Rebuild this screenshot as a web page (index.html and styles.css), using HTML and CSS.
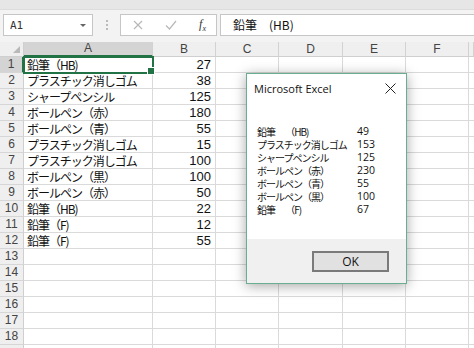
FILE: index.html
```html
<!DOCTYPE html>
<html lang="ja">
<head>
    <meta charset="UTF-8">
    <title>Excel - MsgBox</title>
    <link rel="stylesheet" href="styles.css">
</head>
<body>
    <div class="ribbon"></div>

    <!-- 数式バー -->
    <div class="fbar">
        <div class="namebox"><span>A1</span><span class="caret"></span></div>
        <div class="grip"><i></i><i></i><i></i></div>
        <div class="fx-tools">
            <svg width="10" height="10" viewBox="0 0 10 10"><path d="M1 1L9 9M9 1L1 9" stroke="#b8b8b8" stroke-width="1.2" fill="none"/></svg>
            <svg width="12" height="10" viewBox="0 0 12 10"><path d="M1 5.5L4.5 9L11 1" stroke="#b8b8b8" stroke-width="1.2" fill="none"/></svg>
            <span class="fx">f<sub>x</sub></span>
        </div>
        <div class="fx-input">鉛筆　(HB)</div>
    </div>

    <!-- シート -->
    <div class="sheet">
        <div class="row hdr">
            <div class="corner"><span class="tri"></span></div>
            <div class="ch sel">A</div><div class="ch">B</div><div class="ch">C</div><div class="ch">D</div><div class="ch">E</div><div class="ch">F</div><div class="ch"></div>
        </div>
        <div class="row"><div class="rh sel">1</div><div class="c active">鉛筆（HB)</div><div class="c n">27</div><div class="c"></div><div class="c"></div><div class="c"></div><div class="c"></div><div class="c"></div></div>
        <div class="row"><div class="rh">2</div><div class="c">プラスチック消しゴム</div><div class="c n">38</div><div class="c"></div><div class="c"></div><div class="c"></div><div class="c"></div><div class="c"></div></div>
        <div class="row"><div class="rh">3</div><div class="c">シャープペンシル</div><div class="c n">125</div><div class="c"></div><div class="c"></div><div class="c"></div><div class="c"></div><div class="c"></div></div>
        <div class="row"><div class="rh">4</div><div class="c">ボールペン（赤）</div><div class="c n">180</div><div class="c"></div><div class="c"></div><div class="c"></div><div class="c"></div><div class="c"></div></div>
        <div class="row"><div class="rh">5</div><div class="c">ボールペン（青）</div><div class="c n">55</div><div class="c"></div><div class="c"></div><div class="c"></div><div class="c"></div><div class="c"></div></div>
        <div class="row"><div class="rh">6</div><div class="c">プラスチック消しゴム</div><div class="c n">15</div><div class="c"></div><div class="c"></div><div class="c"></div><div class="c"></div><div class="c"></div></div>
        <div class="row"><div class="rh">7</div><div class="c">プラスチック消しゴム</div><div class="c n">100</div><div class="c"></div><div class="c"></div><div class="c"></div><div class="c"></div><div class="c"></div></div>
        <div class="row"><div class="rh">8</div><div class="c">ボールペン（黒）</div><div class="c n">100</div><div class="c"></div><div class="c"></div><div class="c"></div><div class="c"></div><div class="c"></div></div>
        <div class="row"><div class="rh">9</div><div class="c">ボールペン（赤）</div><div class="c n">50</div><div class="c"></div><div class="c"></div><div class="c"></div><div class="c"></div><div class="c"></div></div>
        <div class="row"><div class="rh">10</div><div class="c">鉛筆（HB)</div><div class="c n">22</div><div class="c"></div><div class="c"></div><div class="c"></div><div class="c"></div><div class="c"></div></div>
        <div class="row"><div class="rh">11</div><div class="c">鉛筆（F)</div><div class="c n">12</div><div class="c"></div><div class="c"></div><div class="c"></div><div class="c"></div><div class="c"></div></div>
        <div class="row"><div class="rh">12</div><div class="c">鉛筆（F)</div><div class="c n">55</div><div class="c"></div><div class="c"></div><div class="c"></div><div class="c"></div><div class="c"></div></div>
        <div class="row"><div class="rh">13</div><div class="c"></div><div class="c"></div><div class="c"></div><div class="c"></div><div class="c"></div><div class="c"></div><div class="c"></div></div>
        <div class="row"><div class="rh">14</div><div class="c"></div><div class="c"></div><div class="c"></div><div class="c"></div><div class="c"></div><div class="c"></div><div class="c"></div></div>
        <div class="row"><div class="rh">15</div><div class="c"></div><div class="c"></div><div class="c"></div><div class="c"></div><div class="c"></div><div class="c"></div><div class="c"></div></div>
        <div class="row"><div class="rh">16</div><div class="c"></div><div class="c"></div><div class="c"></div><div class="c"></div><div class="c"></div><div class="c"></div><div class="c"></div></div>
        <div class="row"><div class="rh">17</div><div class="c"></div><div class="c"></div><div class="c"></div><div class="c"></div><div class="c"></div><div class="c"></div><div class="c"></div></div>
        <div class="row"><div class="rh">18</div><div class="c"></div><div class="c"></div><div class="c"></div><div class="c"></div><div class="c"></div><div class="c"></div><div class="c"></div></div>
        <div class="row"><div class="rh"></div><div class="c"></div><div class="c"></div><div class="c"></div><div class="c"></div><div class="c"></div><div class="c"></div><div class="c"></div></div>
    </div>

    <!-- メッセージボックス -->
    <div class="dialog">
        <div class="dlg-title">
            <span>Microsoft Excel</span>
            <svg width="11" height="11" viewBox="0 0 11 11"><path d="M0.5 0.5L10.5 10.5M10.5 0.5L0.5 10.5" stroke="#222" stroke-width="1" fill="none"/></svg>
        </div>
        <div class="dlg-body">
            <div class="msg">
                <span>鉛筆　 （HB)</span><span>49</span>
                <span>プラスチック消しゴム</span><span>153</span>
                <span>シャープペンシル</span><span>125</span>
                <span>ボールペン（赤）</span><span>230</span>
                <span>ボールペン（青）</span><span>55</span>
                <span>ボールペン（黒）</span><span>100</span>
                <span>鉛筆　 （F)</span><span>67</span>
            </div>
        </div>
        <div class="dlg-foot">
            <button class="ok-btn">OK</button>
        </div>
    </div>
</body>
</html>
```

FILE: styles.css
```css
* {
    box-sizing: border-box;
}
body {
    margin: 0;
    width: 474px;
    height: 348px;
    overflow: hidden;
    position: relative;
    background-color: #ffffff;
    font-family: "Noto Sans CJK JP", sans-serif;
    color: #111;
}
.ribbon {
    height: 10px;
    background-color: #e6e6e6;
    border-bottom: 1px solid #dcdcdc;
}
.fbar {
    display: flex;
    align-items: center;
    height: 32px;
    padding: 0 0 2px 3px;
    background-color: #f3f3f3;
}
.namebox {
    width: 90px;
    height: 22px;
    display: flex;
    align-items: center;
    justify-content: space-between;
    padding: 0 6px 0 6px;
    background-color: #fff;
    border: 1px solid #c6c6c6;
    font: 11px "DejaVu Sans Mono", monospace;
    color: #333;
}
.caret {
    width: 0;
    height: 0;
    border-left: 3px solid transparent;
    border-right: 3px solid transparent;
    border-top: 3px solid #666;
}
.grip {
    width: 27px;
    display: flex;
    flex-direction: column;
    align-items: center;
    gap: 2px;
}
.grip i {
    width: 2px;
    height: 2px;
    background-color: #bbb;
}
.fx-tools {
    width: 97px;
    height: 22px;
    display: flex;
    align-items: center;
    justify-content: space-between;
    padding: 0 10px 0 12px;
    background-color: #fff;
    border: 1px solid #c6c6c6;
}
.fx {
    font: italic 12px "Liberation Serif", serif;
    color: #333;
}
.fx sub {
    font-size: 8px;
}
.fx-input {
    flex: 1;
    height: 22px;
    margin-left: 3px;
    padding-left: 12px;
    line-height: 20px;
    font-size: 12px;
    background-color: #fff;
    border: 1px solid #c6c6c6;
    border-right: none;
}
.sheet {
    display: flex;
    flex-direction: column;
}
.row {
    display: grid;
    grid-template-columns: 24px 129px 63px 63px 64px 63px 63px 1fr;
    height: 16px;
    flex-shrink: 0;
}
.hdr {
    height: 15px;
}
.corner {
    position: relative;
    background-color: #efefef;
    border-right: 1px solid #cfcfcf;
    border-bottom: 1px solid #cfcfcf;
}
.tri {
    position: absolute;
    right: 3px;
    bottom: 3px;
    width: 0;
    height: 0;
    border-left: 7px solid transparent;
    border-bottom: 7px solid #b9b9b9;
}
.ch {
    background-color: #efefef;
    border-right: 1px solid #d2d2d2;
    border-bottom: 1px solid #cfcfcf;
    text-align: center;
    font: 12px/14px "Liberation Sans", sans-serif;
    color: #444;
}
.ch.sel {
    background-color: #d4d4d4;
    border-bottom: 2px solid #217346;
    line-height: 13px;
}
.rh {
    background-color: #efefef;
    border-right: 1px solid #cfcfcf;
    border-bottom: 1px solid #d6d6d6;
    text-align: center;
    font: 12px/15px "Liberation Sans", sans-serif;
    color: #444;
}
.rh.sel {
    background-color: #d4d4d4;
    border-right: 2px solid #217346;
}
.c {
    border-right: 1px solid #dadada;
    border-bottom: 1px solid #dadada;
    padding: 0 3px;
    font-size: 12px;
    line-height: 15px;
    letter-spacing: -1px;
    white-space: nowrap;
}
.c.n {
    text-align: right;
    padding-right: 4px;
    font: 13px/15px "Liberation Sans", sans-serif;
    letter-spacing: 0;
}
.c.active {
    position: relative;
    z-index: 2;
    outline: 2px solid #217346;
    outline-offset: -1px;
}
.c.active::after {
    content: "";
    position: absolute;
    right: -3px;
    bottom: -3px;
    width: 6px;
    height: 6px;
    background-color: #217346;
    border: 1px solid #fff;
}
.dialog {
    position: absolute;
    left: 246px;
    top: 73px;
    width: 161px;
    height: 211px;
    display: flex;
    flex-direction: column;
    background-color: #fff;
    border: 1px solid #6aae91;
    box-shadow: 0 2px 12px rgba(0, 0, 0, 0.35);
    z-index: 5;
}
.dlg-title {
    height: 28px;
    display: flex;
    align-items: center;
    justify-content: space-between;
    padding: 0 10px 0 7px;
    font: 11px "Open Sans", sans-serif;
    color: #111;
}
.dlg-body {
    flex: 1;
    padding: 23px 0 0 10px;
}
.msg {
    display: grid;
    grid-template-columns: 100px auto;
    font-size: 10px;
    line-height: 13px;
    letter-spacing: -1px;
    white-space: pre;
    color: #111;
}
.msg span:nth-child(even) {
    letter-spacing: 0;
    font: 10.5px/13px "Open Sans", sans-serif;
}
.dlg-foot {
    height: 44px;
    display: flex;
    align-items: center;
    justify-content: flex-end;
    padding-right: 17px;
    background-color: #f0f0f0;
}
.ok-btn {
    width: 77px;
    height: 21px;
    background-color: #e1e1e1;
    border: 2px solid #7a7a7a;
    font: 12px "Open Sans", sans-serif;
    color: #111;
    padding: 0;
}
```
